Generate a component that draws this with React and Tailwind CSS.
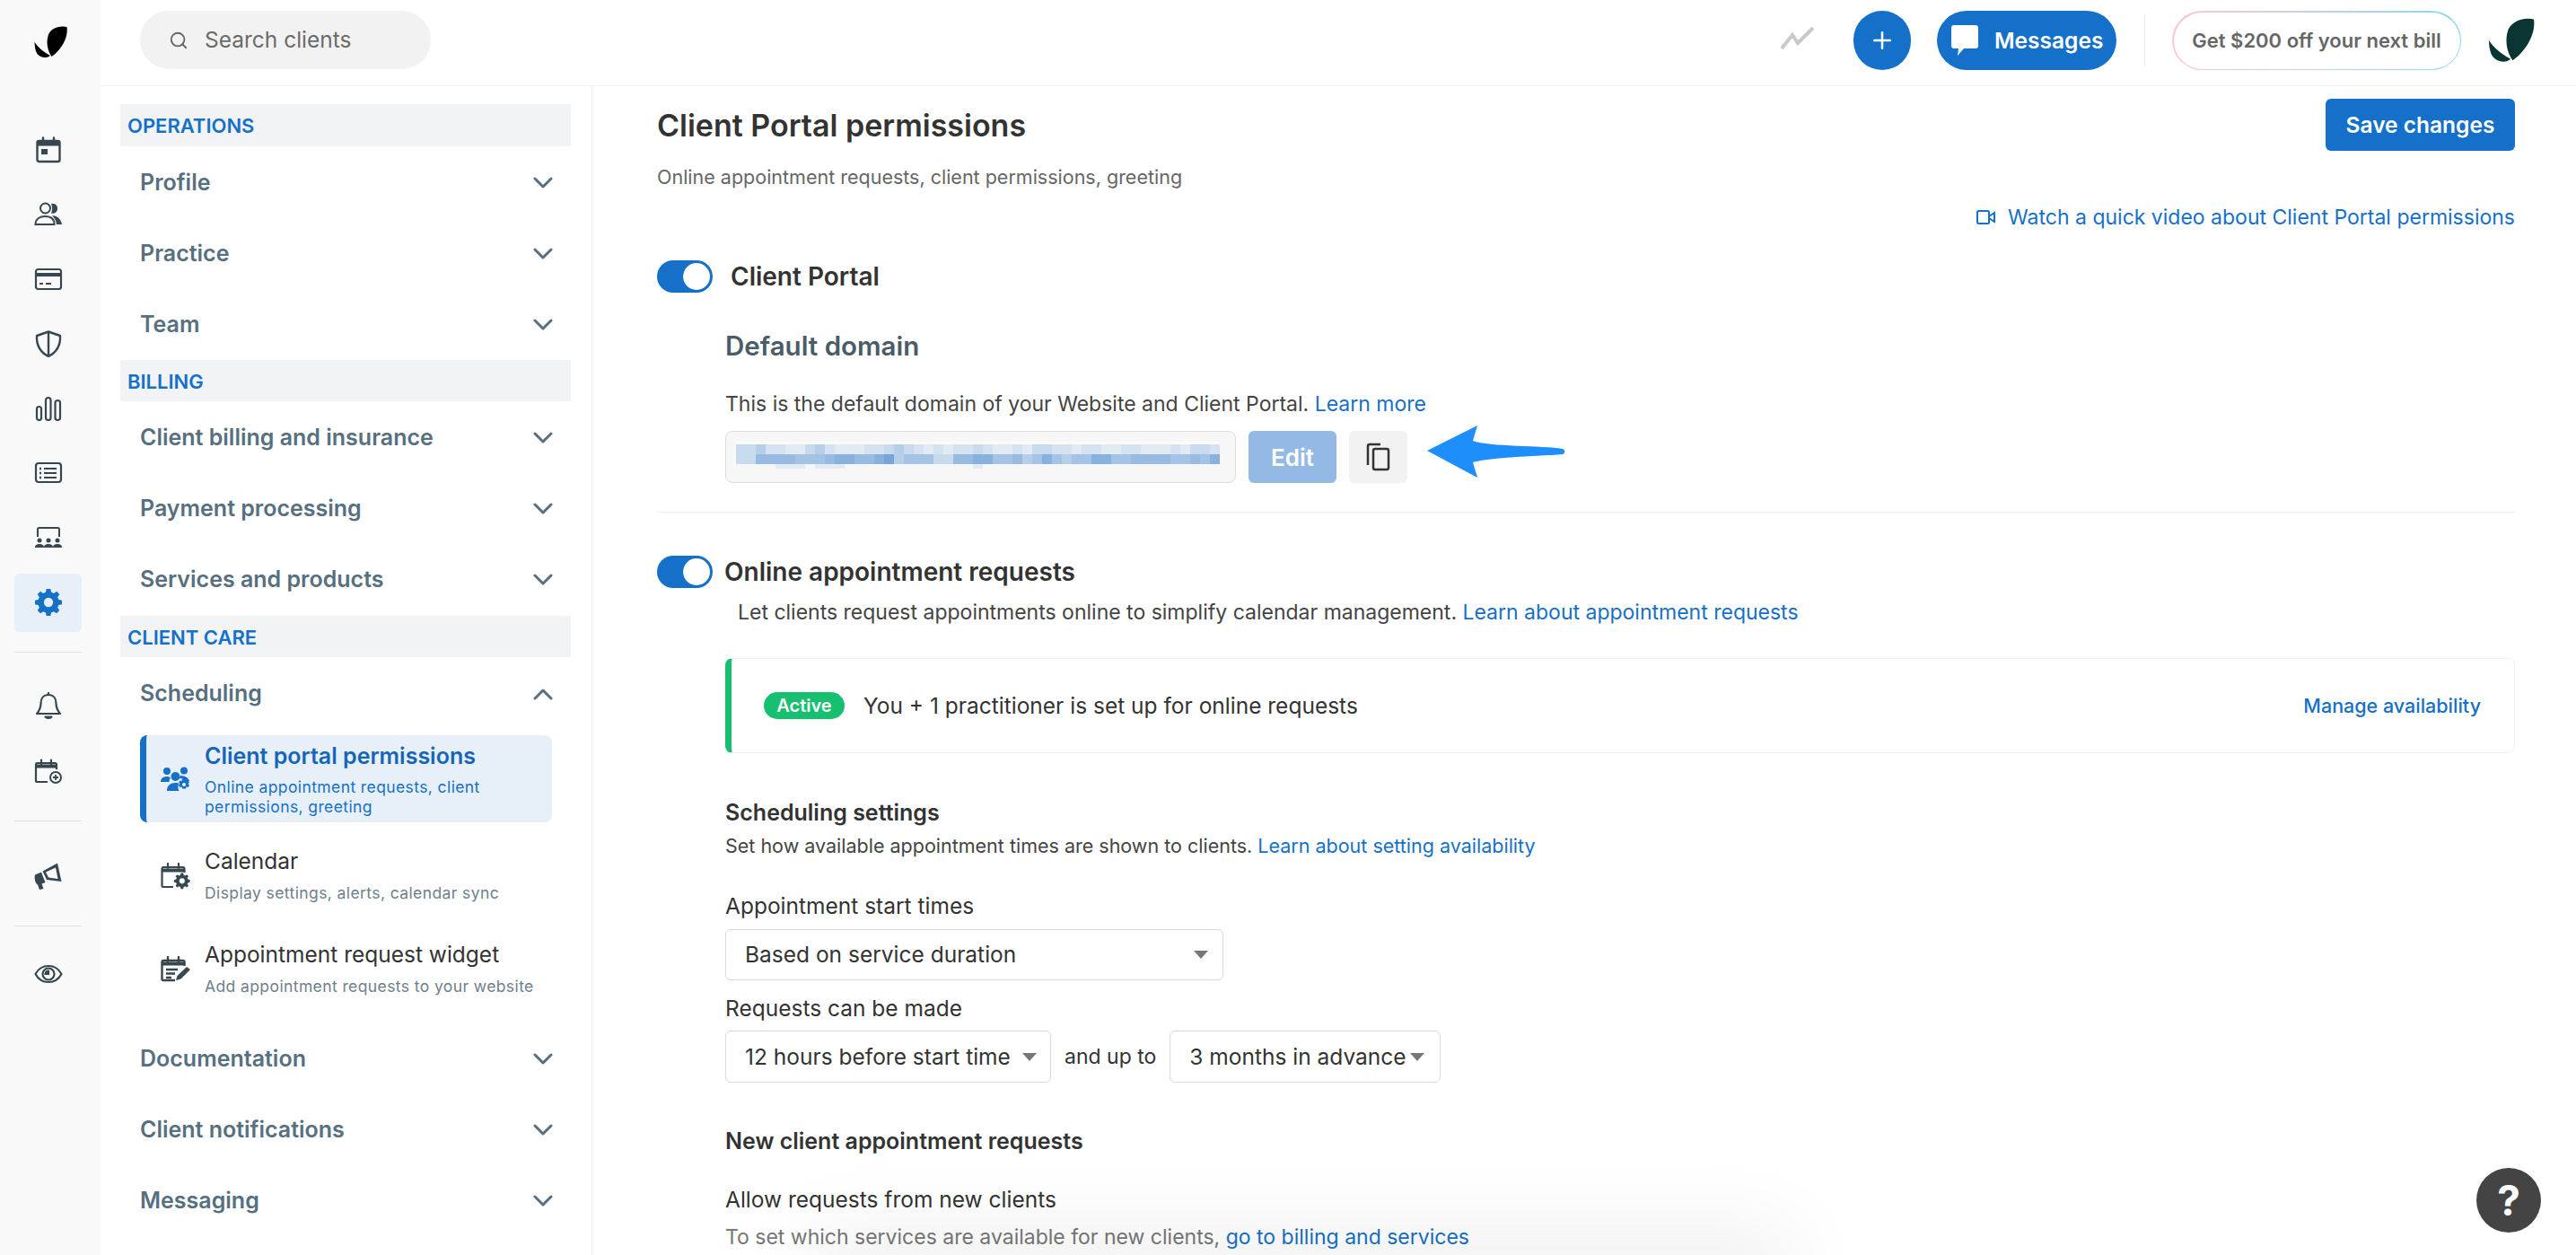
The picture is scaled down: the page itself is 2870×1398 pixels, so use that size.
import { Plus, Search } from "lucide-react";

const FONT = "font-['Inter','Noto_Sans',sans-serif]";

function Logo({ className, fill }) {
  return (
    <svg viewBox="0 0 36 36" className={className} fill={fill}>
      <path d="M36 1C27-1 17 3 15 11 13 18 14 27 19 34 28 28 38 14 36 1Z" />
      <path d="M0 18C4 24 10 29 17.500 33 14 36 7 36 3 31 1 28 0 23 0 18Z" />
    </svg>
  );
}

const ic = "w-[32px] h-[32px] text-[#37474f]";

const IconCalendar = () => (
  <svg viewBox="0 0 32 32" className={ic} fill="none" stroke="currentColor" strokeWidth="2.4">
    <rect x="3.5" y="6" width="25" height="23" rx="2" />
    <path d="M3 9h26" strokeWidth="5" />
    <path d="M10 2.5v5M22 2.5v5" strokeLinecap="round" />
    <rect x="8" y="15" width="7" height="6" fill="currentColor" stroke="none" />
  </svg>
);
const IconPeople = () => (
  <svg viewBox="0 0 32 32" className={ic} fill="none" stroke="currentColor" strokeWidth="2">
    <circle cx="12.5" cy="9" r="5.5" />
    <path d="M1.5 27c0-6 4.500-9 11-9s10 3 10 9z" />
    <path d="M19 4a5.500 5.500 0 1 1 0 10.500c1.500-3 1.500-7.500 0-10.500z" fill="currentColor" stroke="none" />
    <path d="M20 17c5 0 10 3.500 11 10h-6c-.5-4-2.500-7.500-5-10z" fill="currentColor" stroke="none" />
  </svg>
);
const IconCard = () => (
  <svg viewBox="0 0 32 32" className={ic} fill="none" stroke="currentColor" strokeWidth="2.2">
    <rect x="2" y="5" width="28" height="22" rx="2.500" />
    <path d="M2 11h28" strokeWidth="4" />
    <path d="M6 21h4M13 21h6" />
  </svg>
);
const IconShield = () => (
  <svg viewBox="0 0 32 32" className={ic} fill="none" stroke="currentColor" strokeWidth="2.400" strokeLinejoin="round">
    <path d="M16 2.500 29 7c.5 10-3 18-13 23C6 25 2.500 17 3 7z" />
    <path d="M16 3v26" />
  </svg>
);
const IconBars = () => (
  <svg viewBox="0 0 32 32" className={ic} fill="none" stroke="currentColor" strokeWidth="2.200">
    <rect x="3" y="14" width="5" height="15" rx="2.500" />
    <rect x="13" y="4" width="5.500" height="25" rx="2.700" />
    <rect x="23.500" y="7" width="5.500" height="22" rx="2.700" />
  </svg>
);
const IconList = () => (
  <svg viewBox="0 0 32 32" className={ic} fill="none" stroke="currentColor" strokeWidth="2.200">
    <rect x="2" y="5" width="28" height="21" rx="3" />
    <path d="M11 11h14M11 16h14M11 21h14" />
    <path d="M6 11h2M6 16h2M6 21h2" strokeWidth="2.400" />
  </svg>
);
const IconBoard = () => (
  <svg viewBox="0 0 32 32" className={ic} fill="none" stroke="currentColor" strokeWidth="2">
    <path d="M4 15V6.500A1.500 1.500 0 0 1 5.500 5h21A1.500 1.500 0 0 1 28 6.500V15" />
    <g fill="currentColor" stroke="none">
      <circle cx="6" cy="19" r="2.500" /><circle cx="16" cy="19" r="2.500" /><circle cx="26" cy="19" r="2.500" />
      <path d="M1 27c0-3 2-4 5-4s5 1 5 4zM11 27c0-3 2-4 5-4s5 1 5 4zM21 27c0-3 2-4 5-4s5 1 5 4z" />
    </g>
  </svg>
);
const gearPath = "M13.500 1h5l.8 4a11 11 0 0 1 2.900 1.200l3.400-2.300 3.500 3.500-2.300 3.400A11 11 0 0 1 28 13.700l4 .8v5l-4 .8a11 11 0 0 1-1.200 2.900l2.300 3.400-3.500 3.500-3.400-2.300a11 11 0 0 1-2.900 1.200l-.8 4h-5l-.8-4a11 11 0 0 1-2.900-1.200l-3.400 2.300-3.500-3.500 2.300-3.400A11 11 0 0 1 4 20.300l-4-.8v-5l4-.8a11 11 0 0 1 1.200-2.900L2.900 7.400l3.500-3.500 3.400 2.300A11 11 0 0 1 12.700 5zM16 11.500a5.500 5.500 0 1 0 0 11 5.500 5.500 0 0 0 0-11z";
const IconGear = () => (
  <svg viewBox="0 0 32 34" className="w-[30px] h-[32px] text-[#1570c9]" fill="currentColor">
    <path d={gearPath} fillRule="evenodd" />
  </svg>
);
const IconBell = () => (
  <svg viewBox="0 0 32 32" className={ic} fill="none" stroke="currentColor" strokeWidth="2.200" strokeLinejoin="round">
    <path d="M16 3c-5.500 0-8.500 4-8.500 9.500 0 6-2.500 9-4.500 11.500h26c-2-2.500-4.500-5.500-4.500-11.500C24.500 7 21.500 3 16 3z" />
    <path d="M16 1v2" strokeLinecap="round" />
    <path d="M12.500 27.500h7c-1 2-6 2-7 0z" fill="currentColor" />
  </svg>
);
const IconCalPlus = () => (
  <svg viewBox="0 0 32 32" className={ic} fill="none" stroke="currentColor" strokeWidth="2.200">
    <path d="M15 27H3.500A1.500 1.500 0 0 1 2 25.500V7.500A1.500 1.500 0 0 1 3.500 6h20A1.500 1.500 0 0 1 25 7.500V13" />
    <path d="M2 9.500h23" strokeWidth="4" />
    <path d="M8 2.500v5M19 2.500v5" strokeLinecap="round" />
    <circle cx="24" cy="22" r="7" fill="#37474f" stroke="none" />
    <circle cx="24" cy="22" r="5" fill="#f9f9f9" stroke="none" />
    <path d="M24 19v6M21 22h6" strokeWidth="1.800" />
  </svg>
);
const IconMegaphone = () => (
  <svg viewBox="0 0 32 32" className={ic} fill="currentColor">
    <path d="M1 14.500 8 11.500 12.500 23 8.500 24.500 10.500 30 6 31 4 25.500C1 24 0 18 1 14.500Z" />
    <path d="M9.500 10.500 26 1.500 30.500 22 14 20ZM13 11.500 16 17.500 26.500 19 24 6.500Z" fillRule="evenodd" />
  </svg>
);
const IconEye = () => (
  <svg viewBox="0 0 32 32" className={ic} fill="none" stroke="currentColor" strokeWidth="2.200">
    <path d="M1.500 16C5 9.500 10 7 16 7s11 2.500 14.500 9C27 22.500 22 25 16 25S5 22.500 1.500 16z" />
    <circle cx="16" cy="16" r="6.500" />
    <path d="M12.500 16a3.500 3.500 0 0 1 3.500-3.500v3.500z" fill="currentColor" />
  </svg>
);

const Chevron = ({ up }) => (
  <svg viewBox="0 0 22 14" className="w-[22px] h-[14px] text-[#56707f]" fill="none" stroke="currentColor" strokeWidth="3" strokeLinecap="round" strokeLinejoin="round">
    <path d={up ? "M2 12 11 3l9 9" : "M2 2l9 9 9-9"} />
  </svg>
);

const IconPortal = () => (
  <svg viewBox="0 0 34 28" className="w-[34px] h-[28px] text-[#1570c9]" fill="currentColor">
    <circle cx="7" cy="5" r="4" /><circle cx="26" cy="4.500" r="4" /><circle cx="16.500" cy="11" r="5" />
    <path d="M0 17c0-4 3-6 7-6 1.500 0 3 .5 4 1.500-1 1-1.500 3-1.500 4.500z" />
    <path d="M7 27c0-6 4-9 9.500-9 2 0 3 .3 4 1-1.500 2-1.500 6 0 8z" />
    <path d="M22 10c4 0 9 2 10 6l-4 0c-2-2-4-3-7-3z" />
    <path d="M24 14h4l.5 2 2-.5 1.500 2-1.500 1.500 1.500 2-1.500 2-2-.5-.5 2h-4l-.5-2-2 .5-1.500-2 1.500-2-1.500-1.500 1.500-2 2 .5zM26 18a2 2 0 1 0 0 4 2 2 0 0 0 0-4z" fillRule="evenodd" />
  </svg>
);
const IconCalGear = () => (
  <svg viewBox="0 0 34 30" className="w-[34px] h-[30px] text-[#37474f]" fill="none" stroke="currentColor" strokeWidth="2.200">
    <path d="M14 27H3A1.500 1.500 0 0 1 1.500 25.500V6.500A1.500 1.500 0 0 1 3 5h22a1.500 1.500 0 0 1 1.500 1.500V11" />
    <path d="M1.500 8.500h25" strokeWidth="4" />
    <path d="M8 1v5M20 1v5" strokeLinecap="round" />
    <g transform="translate(15 11) scale(.55)">
      <path d={gearPath} fill="currentColor" stroke="none" fillRule="evenodd" />
    </g>
  </svg>
);
const IconCalEdit = () => (
  <svg viewBox="0 0 34 30" className="w-[34px] h-[30px] text-[#37474f]" fill="none" stroke="currentColor" strokeWidth="2.400">
    <path d="M16 27H3A1.500 1.500 0 0 1 1.500 25.500V6.500A1.500 1.500 0 0 1 3 5h22a1.500 1.500 0 0 1 1.500 1.500V11" />
    <path d="M1.500 8.500h25" strokeWidth="4" />
    <path d="M8 1v5M20 1v5" strokeLinecap="round" />
    <path d="M6 15h13M6 19.500h10M6 24h6" />
    <path d="M17 27l1.500-5L29 12l4 3-10.500 10.500z" fill="currentColor" stroke="none" />
  </svg>
);

// blurred-out domain, one digit per mosaic cell
const mosaicTop = "3342211342111223432121223211213322122112211121332";
const mosaicMid = "3366665556776679455533667755645754557755666655657";
const blue = ["#f7f7f7", "#e2eaf4", "#d5e2f1", "#c8daee", "#b6cfe9", "#a5c3e5", "#98bbe2", "#88b1de", "#7eaada", "#78a5d8"];

function Mosaic() {
  return (
    <svg width="540" height="34" className="shrink-0">
      <rect x="0" y="0" width="539" height="3" fill="#fbfaf6" />
      {[...mosaicTop].map((d, i) => (
        <rect key={i} x={i * 11} y="3" width="11" height="11" fill={blue[+d]} />
      ))}
      {[...mosaicMid].map((d, i) => (
        <rect key={i} x={i * 11} y="14" width="11" height="11" fill={blue[+d]} />
      ))}
      {[4, 5, 6, 8, 9, 10, 24].map((i) => (
        <rect key={i} x={i * 11} y="25" width="11" height="5" fill="#e2eaf4" />
      ))}
    </svg>
  );
}

const Section = ({ children, className = "h-[46px] my-px" }) => (
  <div className={`flex items-center pl-[8px] pt-[2px] bg-[#f1f3f5] text-[22px] font-semibold text-[#1570c9] ${className}`}>{children}</div>
);

const Group = ({ label, up }) => (
  <div className="h-[79px] flex items-center justify-between pl-[22px] pr-[20px] text-[25px] font-semibold text-[#56707f]">
    <span>{label}</span>
    <Chevron up={up} />
  </div>
);

const SubItem = ({ icon, title, sub, className }) => (
  <div className={`flex items-center ml-[22px] pl-[7px] ${className}`}>
    <div className="w-[65px] flex justify-center shrink-0">{icon}</div>
    <div>
      <div className="text-[24.500px] leading-[32px] text-[#333]">{title}</div>
      <div className="mt-[6px] text-[17.500px] leading-[28px] tracking-[0.4px] text-[#6e808c]">{sub}</div>
    </div>
  </div>
);

const Toggle = () => (
  <div className="w-[62px] h-[36px] rounded-full bg-[#1570c9] relative shrink-0">
    <div className="absolute right-[3px] top-[3px] w-[30px] h-[30px] rounded-full bg-white"></div>
  </div>
);

const Caret = () => <div className="w-0 h-0 border-x-[8px] border-x-transparent border-t-[9px] border-t-[#777] shrink-0"></div>;

const Select = ({ children, className }) => (
  <div className={`flex items-center justify-between border border-[#d9d9d9] rounded-[6px] pl-[21px] bg-white text-[24.500px] text-[#333] ${className}`}>
    <span className="whitespace-nowrap">{children}</span>
    <Caret />
  </div>
);

const A = ({ children, className = "" }) => <span className={`text-[#1570c9] ${className}`}>{children}</span>;

const RailSlot = ({ children }) => <div className="h-[72px] pr-[5px] flex items-center justify-center">{children}</div>;
const RailDivider = ({ className }) => <div className={`h-px ml-[16px] mr-[21px] bg-[#dfdfdf] ${className}`}></div>;

export default function App() {
  return (
    <div className={`${FONT} h-screen w-full flex overflow-hidden bg-white relative`}>
      {/* rail */}
      <div className="w-[112px] shrink-0 bg-[#f9f9f9]">
        <div className="h-[94px] flex items-center justify-center pl-[1px]">
          <Logo className="w-[37px] h-[36px]" fill="#000" />
        </div>
        <div className="mt-[37px]">
          <RailSlot><IconCalendar /></RailSlot>
          <RailSlot><IconPeople /></RailSlot>
          <RailSlot><IconCard /></RailSlot>
          <RailSlot><IconShield /></RailSlot>
          <RailSlot><IconBars /></RailSlot>
          <RailSlot><IconList /></RailSlot>
          <RailSlot><IconBoard /></RailSlot>
          <RailSlot>
            <div className="w-[75px] h-[65px] rounded-[6px] bg-[#e7f0f9] flex items-center justify-center"><IconGear /></div>
          </RailSlot>
        </div>
        <RailDivider className="mt-[19px]" />
        <div className="mt-[24px]">
          <RailSlot><IconBell /></RailSlot>
          <div className="mt-px"><RailSlot><IconCalPlus /></RailSlot></div>
        </div>
        <RailDivider className="mt-[18px]" />
        <div className="mt-[25px]"><RailSlot><IconMegaphone /></RailSlot></div>
        <RailDivider className="mt-[19px]" />
        <div className="mt-[17px]"><RailSlot><IconEye /></RailSlot></div>
      </div>

      <div className="flex-1 min-w-0 flex flex-col">
        {/* top bar */}
        <div className="h-[96px] shrink-0 border-b border-[#f0f0f0] flex items-start pt-[12px] pl-[44px]">
          <div className="w-[324px] h-[65px] rounded-full bg-[#f2f2f2] flex items-center pl-[32px] text-[24.500px] text-[#6b6b6b]">
            <Search size={22} strokeWidth={2} className="text-[#666]" />
            <span className="ml-[18px]">Search clients</span>
          </div>
          <div className="ml-auto flex items-start pr-[46px]">
            <svg viewBox="0 0 38 26" className="w-[38px] h-[26px] mt-[18px] text-[#c9c9c9]" fill="none" stroke="currentColor" strokeWidth="4">
              <path d="M1 24 13 9l6 9L36 1" />
            </svg>
            <div className="ml-[43px] w-[64px] h-[66px] rounded-full bg-[#1570c9] flex items-center justify-center text-white">
              <Plus size={30} strokeWidth={2} />
            </div>
            <div className="ml-[29px] w-[200px] h-[66px] rounded-full bg-[#1570c9] flex items-center pl-[16px] text-white text-[24.500px] font-semibold">
              <svg viewBox="0 0 30 34" className="w-[30px] h-[34px]" fill="currentColor">
                <path d="M3 0h24a3 3 0 0 1 3 3v20a3 3 0 0 1-3 3H14l-7 8 1-8H3a3 3 0 0 1-3-3V3a3 3 0 0 1 3-3z" />
              </svg>
              <span className="ml-[18px]">Messages</span>
            </div>
            <div className="ml-[31px] w-px h-[58px] mt-[4px] bg-[#eeeeee]"></div>
            <div className="ml-[30px] w-[322px] h-[66px] rounded-full p-[1.500px] bg-gradient-to-r from-[#f9c9cf] to-[#82d6f2]">
              <div className="w-full h-full rounded-full bg-white flex items-center justify-center text-[22px] font-semibold text-[#666]">
                Get $200 off your next bill
              </div>
            </div>
            <Logo className="ml-[30px] mt-[8px] w-[52px] h-[50px]" fill="#0b3533" />
          </div>
        </div>

        <div className="flex-1 min-h-0 flex">
          {/* settings sidebar */}
          <div className="w-[548px] shrink-0 pl-[22px] pr-[23px] pt-[20px] border-r border-[#f0f0f0]">
            <Section className="h-[47px]">OPERATIONS</Section>
            <div className="mt-px">
              <Group label="Profile" />
              <Group label="Practice" />
              <Group label="Team" />
            </div>
            <Section className="h-[46px] mb-px">BILLING</Section>
            <Group label="Client billing and insurance" />
            <Group label="Payment processing" />
            <Group label="Services and products" />
            <Section>CLIENT CARE</Section>
            <Group label="Scheduling" up />

            <div className="mt-[7px] ml-[22px] mr-[21px] h-[97px] rounded-[8px] border-l-[7px] border-[#1570c9] bg-[#e7f0f9] flex items-center">
              <div className="w-[65px] flex justify-center shrink-0"><IconPortal /></div>
              <div>
                <div className="text-[25px] leading-[32px] font-semibold text-[#1565b8]">Client portal permissions</div>
                <div className="mt-[8px] text-[17.500px] leading-[22px] tracking-[0.4px] text-[#1570c9] max-w-[340px]">
                  Online appointment requests, client permissions, greeting
                </div>
              </div>
            </div>
            <SubItem className="mt-[27px]" icon={<IconCalGear />} title="Calendar" sub="Display settings, alerts, calendar sync" />
            <SubItem className="mt-[38px]" icon={<IconCalEdit />} title="Appointment request widget" sub="Add appointment requests to your website" />
            <div className="mt-[27px]">
              <Group label="Documentation" />
              <Group label="Client notifications" />
              <Group label="Messaging" />
            </div>
          </div>

          {/* main panel */}
          <div className="flex-1 min-w-0 pl-[72px] pr-[68px] pt-[14px] relative">
            <div className="flex justify-between items-center h-[58px]">
              <h1 className="text-[34px] font-semibold text-[#333]">Client Portal permissions</h1>
              <div className="w-[211px] h-[58px] rounded-[6px] bg-[#1570c9] flex items-center justify-center text-white text-[24.500px] font-semibold">Save changes</div>
            </div>
            <p className="mt-[13px] text-[21.500px] leading-[32px] text-[#666]">Online appointment requests, client permissions, greeting</p>
            <div className="mt-[13px] flex justify-end items-center text-[23px] leading-[32px] text-[#1570c9]">
              <svg viewBox="0 0 22 18" className="w-[22px] h-[18px] mr-[13px]" fill="none" stroke="currentColor" strokeWidth="2">
                <rect x="1" y="2" width="13" height="14" rx="1.500" />
                <path d="M14 8l6-4v10l-6-4" />
              </svg>
              Watch a quick video about Client Portal permissions
            </div>

            <div className="mt-[32px] flex items-center h-[36px]">
              <Toggle />
              <span className="ml-[20px] text-[28px] font-semibold text-[#333]">Client Portal</span>
            </div>

            <div className="pl-[76px]">
              <div className="mt-[39px] text-[29.500px] leading-[40px] font-semibold text-[#4b5c67]">Default domain</div>
              <div className="mt-[29px] text-[23px] leading-[32px] text-[#444]">
                This is the default domain of your Website and Client Portal. <A>Learn more</A>
              </div>
              <div className="mt-[14px] flex items-start">
                <div className="w-[569px] h-[58px] rounded-[8px] border border-[#dddddd] bg-[#f7f7f7] flex items-center pl-[11px]">
                  <Mosaic />
                </div>
                <div className="ml-[14px] w-[98px] h-[58px] rounded-[6px] bg-[#94b9e5] flex items-center justify-center text-white text-[26px] font-semibold">Edit</div>
                <div className="ml-[14px] w-[65px] h-[58px] rounded-[6px] bg-[#f2f2f2] flex items-center justify-center">
                  <svg viewBox="0 0 28 32" className="w-[28px] h-[32px] text-[#333]" fill="none" stroke="currentColor" strokeWidth="2.500">
                    <path d="M2 25V4a2 2 0 0 1 2-2h12" />
                    <rect x="8" y="7" width="17" height="23" rx="2" />
                  </svg>
                </div>
                <svg viewBox="0 0 156 62" className="ml-[21px] -mt-[9px] w-[156px] h-[62px]">
                  <path d="M1 31 57 3 52 20C70 27 130 25 152 29c3 1 3 5 0 6C130 37 72 38 52 44l5 17z" fill="#1e8efb" />
                </svg>
              </div>
            </div>

            <div className="mt-[32px] h-px bg-[#efefef]"></div>

            <div className="mt-[48px] flex items-center h-[36px]">
              <Toggle />
              <span className="ml-[13px] text-[28px] font-semibold text-[#333]">Online appointment requests</span>
            </div>
            <div className="mt-[11px] pl-[90px] text-[23px] leading-[32px] text-[#444]">
              Let clients request appointments online to simplify calendar management. <A>Learn about appointment requests</A>
            </div>

            <div className="pl-[76px]">
              <div className="mt-[35px] h-[106px] rounded-[8px] border border-[#f0f0f0] border-l-[7px] border-l-[#17bf70] flex items-center pl-[36px] pr-[37px]">
                <div className="h-[30px] w-[90px] rounded-full bg-[#17bf70] flex items-center justify-center text-white text-[20px] font-semibold">Active</div>
                <span className="ml-[21px] text-[24.500px] text-[#333]">You + 1 practitioner is set up for online requests</span>
                <span className="ml-auto text-[21.500px] font-medium text-[#1570c9]">Manage availability</span>
              </div>

              <div className="mt-[50px] text-[25px] leading-[32px] font-semibold text-[#333]">Scheduling settings</div>
              <div className="mt-[7px] text-[21.500px] leading-[28px] text-[#444]">
                Set how available appointment times are shown to clients. <A>Learn about setting availability</A>
              </div>
              <div className="mt-[37px] text-[24.500px] leading-[32px] text-[#333]">Appointment start times</div>
              <Select className="mt-[10px] w-[555px] h-[57px] pr-[16px]">Based on service duration</Select>
              <div className="mt-[15px] text-[24.500px] leading-[32px] text-[#333]">Requests can be made</div>
              <div className="mt-[9px] flex items-center">
                <Select className="w-[363px] h-[58px] pr-[15px]">12 hours before start time</Select>
                <span className="ml-[15px] text-[23px] text-[#333]">and up to</span>
                <Select className="ml-[15px] w-[302px] h-[58px] pr-[17px]">3 months in advance</Select>
              </div>
              <div className="mt-[49px] text-[25px] leading-[32px] font-semibold text-[#333]">New client appointment requests</div>
              <div className="mt-[33px] text-[24.500px] leading-[32px] text-[#333]">Allow requests from new clients</div>
              <div className="mt-[10px] text-[23px] leading-[32px] text-[#777]">
                To set which services are available for new clients, <A>go to billing and services</A>
              </div>
            </div>
          </div>
        </div>
      </div>

      {/* floating bits */}
      <div className="absolute left-[900px] -bottom-[50px] w-[1100px] h-[80px] rounded-full bg-black/[0.06] blur-2xl"></div>
      <div className="absolute left-[2759px] top-[1301px] w-[72px] h-[72px] rounded-full bg-[#444] flex items-center justify-center text-white text-[46px] font-bold leading-none">?</div>
    </div>
  );
}
